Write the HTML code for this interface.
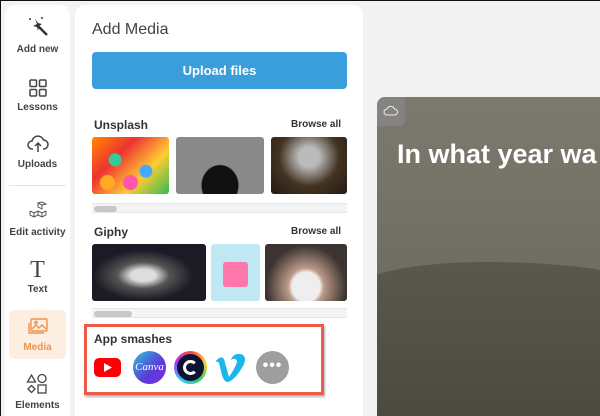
<!DOCTYPE html>
<html><head><style>
*{margin:0;padding:0;box-sizing:border-box}
html{width:600px;height:416px;overflow:hidden}
body{width:600px;height:416px;overflow:hidden;background:#f3f3f3;font-family:"Liberation Sans",sans-serif;position:relative;border-top:1px solid #111;border-left:1px solid #111}
.abs{position:absolute}
.side{left:4px;top:4px;width:65px;height:411px;background:#fff;border-radius:10px 10px 0 0}
.lab{position:absolute;width:65px;text-align:center;font-size:10px;font-weight:bold;color:#444;left:4px}
.panel{left:74px;top:4px;width:288px;height:411px;background:#fff;border-radius:10px 10px 0 0}
.h{font-size:12px;font-weight:bold;color:#333}
.ba{font-size:10px;font-weight:bold;color:#333}
.img{border-radius:3px}
.sb{height:10px;background:#f4f4f4;border-top:1px solid #e6e6e6;border-bottom:1px solid #e6e6e6}
.th{position:absolute;top:2px;height:6px;background:#c8c8c8;border-radius:3px;left:2px}
</style></head><body>
<div class="abs side"></div>
<svg class="abs" style="left:26px;top:14px" width="22" height="22" viewBox="0 0 22 22"><path d="M10 10 L20 20" stroke="#333" stroke-width="2.5"/><path d="M8 4 L10 9 L6 11 L10 12 L11 16 L12 11 L15 9 L11 8 Z" fill="#333"/><circle cx="3" cy="4" r="1" fill="#333"/><circle cx="15" cy="3" r="1" fill="#333"/></svg>
<div class="lab" style="top:43px">Add new</div>
<svg class="abs" style="left:27px;top:77px" width="20" height="20" viewBox="0 0 20 20" fill="none" stroke="#444" stroke-width="1.5"><rect x="2" y="2" width="6.5" height="6.5" rx="1"/><rect x="11.5" y="2" width="6.5" height="6.5" rx="1"/><rect x="2" y="11.5" width="6.5" height="6.5" rx="1"/><rect x="11.5" y="11.5" width="6.5" height="6.5" rx="1"/></svg>
<div class="lab" style="top:101px">Lessons</div>
<svg class="abs" style="left:26px;top:133px" width="22" height="20" viewBox="0 0 22 20" fill="none" stroke="#444" stroke-width="1.5"><path d="M6 15 H5 a4 4 0 0 1 0-8 a6 6 0 0 1 11.5-1 a4.5 4.5 0 0 1 0 9 H16"/><path d="M11 18 V9 M8 12 L11 9 L14 12"/></svg>
<div class="lab" style="top:158px">Uploads</div>
<div class="abs" style="left:8px;top:184px;width:57px;height:1px;background:#e3e3e3"></div>
<svg class="abs" style="left:25px;top:200px" width="22" height="20" viewBox="0 0 22 20" fill="none" stroke="#555" stroke-width="1"><path d="M12 2 l4 2 v4 l-4 -2z M12 2 l4-1 4 2 -4 1"/><path d="M4 10 l4 2 4-2 4 2 4-2 M4 10 v4 l4 2 v-4 M12 10 v4 l-4 2 M12 14 l4 2 4-2 v-4 M16 12 v4"/></svg>
<div class="lab" style="top:226px">Edit activity</div>
<div class="abs" style="left:4px;width:65px;top:256px;text-align:center;font-family:'Liberation Serif',serif;font-size:24px;color:#444">T</div>
<div class="lab" style="top:283px">Text</div>
<div class="abs" style="left:8px;top:309px;width:57px;height:49px;background:#fdeee2;border-radius:6px"></div>
<svg class="abs" style="left:26px;top:316px" width="22" height="20" viewBox="0 0 22 20" fill="none" stroke="#f0934a" stroke-width="1.4"><rect x="4" y="2" width="16" height="12" rx="1"/><path d="M2 6 v10 h15"/><path d="M5 12 l4-4 3 3 3-3 4 4"/><circle cx="9" cy="5.5" r="1.2"/></svg>
<div class="lab" style="top:341px;color:#f0934a">Media</div>
<svg class="abs" style="left:25px;top:372px" width="22" height="22" viewBox="0 0 22 22" fill="none" stroke="#444" stroke-width="1.3"><path d="M5.5 2 L9.5 9 H1.5 Z"/><circle cx="16" cy="5.5" r="4"/><path d="M5.5 12.5 l3.5 3.5 -3.5 3.5 -3.5-3.5z"/><rect x="12" y="12" width="8" height="8"/></svg>
<div class="lab" style="top:399px">Elements</div>

<div class="abs panel"></div>
<div class="abs" style="left:91px;top:20px;font-size:16px;color:#444">Add Media</div>
<div class="abs" style="left:91px;top:51px;width:255px;height:37px;background:#3a9edb;border-radius:4px;color:#fff;font-weight:bold;font-size:13px;text-align:center;line-height:37px">Upload files</div>
<div class="abs h" style="left:93px;top:117px">Unsplash</div>
<div class="abs ba" style="left:290px;top:118px">Browse all</div>
<div class="abs img" style="left:91px;top:136px;width:77px;height:57px;background:radial-gradient(circle at 30% 40%,#3c9 0 6px,transparent 7px),radial-gradient(circle at 70% 60%,#4af 0 6px,transparent 7px),radial-gradient(circle at 50% 80%,#f5a 0 7px,transparent 8px),radial-gradient(circle at 20% 80%,#fa2 0 7px,transparent 8px),linear-gradient(135deg,#f80,#e33,#fc3,#3b5)"></div>
<div class="abs img" style="left:175px;top:136px;width:88px;height:57px;background:radial-gradient(ellipse at 50% 85%,#111 0 18px,transparent 19px),#8a8a8a"></div>
<div class="abs img" style="left:270px;top:136px;width:76px;height:57px;background:radial-gradient(ellipse at 50% 35%,#bbb 0 10px,#432 30px,#1a1412 60px)"></div>
<div class="abs sb" style="left:91px;top:202px;width:255px"><div class="th" style="width:23px"></div></div>
<div class="abs h" style="left:93px;top:224px">Giphy</div>
<div class="abs ba" style="left:290px;top:225px">Browse all</div>
<div class="abs img" style="left:91px;top:243px;width:114px;height:57px;background:radial-gradient(ellipse at 45% 55%,#ddd 0 12px,#555 26px,#1b1b25 50px)"></div>
<div class="abs img" style="left:210px;top:243px;width:49px;height:57px;background:#bfe8f2"><div style="position:absolute;left:12px;top:18px;width:25px;height:25px;background:#f7a;border-radius:3px"></div></div>
<div class="abs img" style="left:264px;top:243px;width:82px;height:57px;background:radial-gradient(ellipse at 50% 75%,#eee 0 14px,#b98 18px,#3b3431 40px)"></div>
<div class="abs sb" style="left:91px;top:307px;width:255px"><div class="th" style="width:38px"></div></div>
<div class="abs" style="left:83px;top:323px;width:240px;height:71px;border:3px solid #ec5a49;box-shadow:1px 2px 2px rgba(0,0,0,.3)"></div>
<div class="abs h" style="left:93px;top:331px">App smashes</div>
<div class="abs" style="left:93px;top:357px;width:27px;height:19px;background:#f00;border-radius:5px"></div>
<svg class="abs" style="left:102px;top:361px" width="10" height="11"><path d="M1 1 L9 5.5 L1 10Z" fill="#fff"/></svg>
<div class="abs" style="left:132px;top:350px;width:33px;height:33px;border-radius:50%;background:linear-gradient(135deg,#2bc3d5,#5b3bd9 60%,#7d2ae8);color:#fff;font-family:'Liberation Serif',serif;font-style:italic;font-size:11px;text-align:center;line-height:33px">Canva</div>
<div class="abs" style="left:173px;top:350px;width:33px;height:33px;border-radius:50%;background:conic-gradient(#f44,#fc3,#3c6,#3cf,#a3f,#f44)"></div>
<div class="abs" style="left:176px;top:353px;width:27px;height:27px;border-radius:50%;background:#0d1433"></div>
<div class="abs" style="left:182px;top:359px;width:15px;height:15px;border-radius:50%;border:3px solid #fff;border-right-color:transparent"></div>
<svg class="abs" style="left:214px;top:352px" width="33" height="30" viewBox="0 0 33 30"><path d="M1 8 Q6 2 9 6 L14 24 Q22 12 22 8 Q20 4 16 7 Q18 0 26 1 Q33 4 28 13 Q20 27 13 29 Q9 29 7 22 L4 10 Q3 8 1 9Z" fill="#1ab7ea"/></svg>
<div class="abs" style="left:255px;top:350px;width:33px;height:33px;border-radius:50%;background:#9e9e9e;color:#fff;font-size:16px;font-weight:bold;text-align:center;line-height:29px;letter-spacing:1px">•••</div>

<div class="abs" style="left:376px;top:96px;width:224px;height:320px;border-radius:8px 0 0 0;overflow:hidden;background:linear-gradient(180deg,#7c796e 0%,#727065 45%,#65635a 100%)">
<div class="abs" style="left:-20px;top:165px;width:280px;height:200px;background:linear-gradient(180deg,#5a584e,#47463d);border-radius:50% 60% 0 0/30px 25px 0 0"></div>
<div class="abs" style="left:0;top:0;width:28px;height:29px;background:#858380;border-radius:0 0 6px 0"></div>
<svg class="abs" style="left:6px;top:8px" width="16" height="12" viewBox="0 0 16 12" fill="none" stroke="#eee" stroke-width="1"><path d="M4 10 a3 3 0 0 1 0-6 a4 4 0 0 1 7.5 0 a3 3 0 0 1 0 6z"/></svg>
<div class="abs" style="left:20px;top:42px;color:#fff;font-size:27px;font-weight:bold;white-space:nowrap">In what year wa</div>
</div>
</body></html>
